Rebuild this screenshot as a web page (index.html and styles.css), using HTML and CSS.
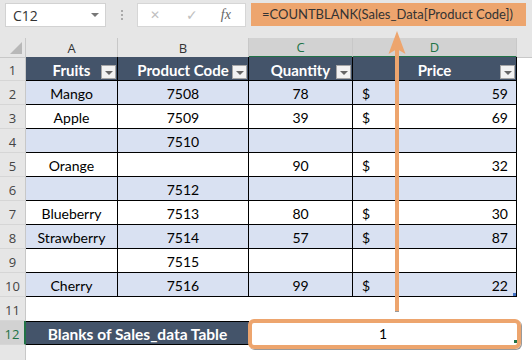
FILE: index.html
```html
<!DOCTYPE html>
<html lang="en">
<head>
 <meta charset="UTF-8">
 <title>COUNTBLANK</title>
 <link rel="stylesheet" href="styles.css">
</head>
<body>
 <div class="toolbar">
  <div class="namebox"><span>C12</span><span class="caret"></span></div>
  <div class="grip"><i></i><i></i><i></i></div>
  <div class="fxbox">
   <span class="cancel">&#x2715;</span>
   <span class="enter">&#x2713;</span>
   <span class="fx">fx</span>
  </div>
  <div class="formula">=COUNTBLANK(Sales_Data[Product Code])</div>
 </div>

 <div class="sheet">
  <div class="row heads">
   <div class="corner"></div>
   <div class="ch">A</div>
   <div class="ch">B</div>
   <div class="ch sel">C</div>
   <div class="ch sel">D</div>
   <div class="ch rest"></div>
  </div>
  <div class="row">
   <div class="rh">1</div>
   <div class="c head">Fruits<b class="filter"></b></div>
   <div class="c head">Product Code<b class="filter"></b></div>
   <div class="c head">Quantity<b class="filter"></b></div>
   <div class="c head">Price<b class="filter"></b></div>
   <div></div>
  </div>
  <div class="row band">
   <div class="rh">2</div>
   <div class="c">Mango</div><div class="c">7508</div><div class="c">78</div>
   <div class="c price"><span>$</span><span>59</span></div><div></div>
  </div>
  <div class="row">
   <div class="rh">3</div>
   <div class="c">Apple</div><div class="c">7509</div><div class="c">39</div>
   <div class="c price"><span>$</span><span>69</span></div><div></div>
  </div>
  <div class="row band">
   <div class="rh">4</div>
   <div class="c"></div><div class="c">7510</div><div class="c"></div>
   <div class="c price"></div><div></div>
  </div>
  <div class="row">
   <div class="rh">5</div>
   <div class="c">Orange</div><div class="c"></div><div class="c">90</div>
   <div class="c price"><span>$</span><span>32</span></div><div></div>
  </div>
  <div class="row band">
   <div class="rh">6</div>
   <div class="c"></div><div class="c">7512</div><div class="c"></div>
   <div class="c price"></div><div></div>
  </div>
  <div class="row">
   <div class="rh">7</div>
   <div class="c">Blueberry</div><div class="c">7513</div><div class="c">80</div>
   <div class="c price"><span>$</span><span>30</span></div><div></div>
  </div>
  <div class="row band">
   <div class="rh">8</div>
   <div class="c">Strawberry</div><div class="c">7514</div><div class="c">57</div>
   <div class="c price"><span>$</span><span>87</span></div><div></div>
  </div>
  <div class="row">
   <div class="rh">9</div>
   <div class="c"></div><div class="c">7515</div><div class="c"></div>
   <div class="c price"></div><div></div>
  </div>
  <div class="row band">
   <div class="rh">10</div>
   <div class="c">Cherry</div><div class="c">7516</div><div class="c">99</div>
   <div class="c price last"><span>$</span><span>22</span></div><div></div>
  </div>
  <div class="row">
   <div class="rh">11</div>
  </div>
  <div class="row">
   <div class="rh sel">12</div>
   <div class="label">Blanks of Sales_data Table</div>
   <div class="result">1</div>
  </div>
  <div class="row">
   <div class="rh"></div>
  </div>
 </div>

 <svg class="arrow" width="28" height="288" viewBox="0 0 28 288">
  <rect x="12" y="18" width="4" height="266" fill="#eda56e"/>
  <rect x="12" y="283" width="4" height="1" fill="#9a9a9a"/>
  <polygon points="14,3 22.5,26 14,21 5.5,26" fill="#eda56e"/>
 </svg>
</body>
</html>
```

FILE: styles.css
```css
* {
 box-sizing: border-box;
}

body {
 margin: 0;
 width: 532px;
 height: 360px;
 overflow: hidden;
 position: relative;
 background: #ffffff;
 font-family: Lato, "Liberation Sans", sans-serif;
 color: #000;
}

/* formula bar */
.toolbar {
 display: flex;
 align-items: flex-start;
 height: 38px;
 padding: 3px 0 0 5px;
 background: #e6e6e6;
}

.namebox {
 display: flex;
 align-items: center;
 justify-content: space-between;
 width: 101px;
 height: 24px;
 padding: 0 6px 0 7px;
 background: #fff;
 border: 1px solid #d2d2d2;
 font: 14px "Open Sans", sans-serif;
 color: #333;
}

.caret {
 border-left: 4px solid transparent;
 border-right: 4px solid transparent;
 border-top: 4px solid #777;
}

.grip {
 display: flex;
 flex-direction: column;
 align-items: center;
 gap: 2px;
 width: 31px;
 padding-top: 7px;
}

.grip i {
 width: 2px;
 height: 2px;
 background: #aaa;
}

.fxbox {
 display: flex;
 align-items: center;
 width: 109px;
 height: 24px;
 background: #fff;
 border: 1px solid #d6d6d6;
 color: #c0c0c0;
 font-size: 14px;
}

.cancel {
 margin-left: 12px;
 font-family: "DejaVu Sans", sans-serif;
 font-size: 12px;
}

.enter {
 margin-left: 26px;
 font-family: "DejaVu Sans", sans-serif;
 font-size: 14px;
}

.fx {
 margin-left: 23px;
 font: italic 14px "Liberation Serif", serif;
 color: #666;
}

.formula {
 flex: 1;
 height: 23px;
 margin: 0 6px 0 5px;
 padding-left: 11px;
 background: #eda56e;
 font: 13px Lato, sans-serif;
 line-height: 23px;
 color: #333;
 white-space: nowrap;
}

/* sheet grid */
.row {
 display: grid;
 grid-template-columns: 26px 92px 131px 104px 164px 1fr;
 height: 24px;
}

.row.heads {
 height: 19px;
}

.corner {
 position: relative;
 background: #e6e6e6;
 border-right: 1px solid #c8c8c8;
 border-bottom: 1px solid #c8c8c8;
}

.corner::after {
 content: "";
 position: absolute;
 right: 3px;
 bottom: 3px;
 border-left: 12px solid transparent;
 border-bottom: 12px solid #b8b8b8;
}

.ch {
 display: flex;
 align-items: center;
 justify-content: center;
 background: #e6e6e6;
 border-right: 1px solid #c8c8c8;
 border-bottom: 1px solid #c8c8c8;
 font: 13px "Open Sans", sans-serif;
 color: #333;
}

.ch.sel {
 background: #d2d2d2;
 border-bottom: 2px solid #217346;
 color: #217346;
}

.ch.rest {
 border-right: none;
}

.rh {
 display: flex;
 align-items: center;
 justify-content: center;
 background: #e6e6e6;
 border-right: 1px solid #c8c8c8;
 border-bottom: 1px solid #d6d6d6;
 font: 13px "Open Sans", sans-serif;
 color: #444;
 padding-top: 2px;
}

.rh.sel {
 background: #d2d2d2;
 border-right: 2px solid #217346;
 color: #217346;
}

.c {
 position: relative;
 display: flex;
 align-items: center;
 justify-content: center;
 border-right: 1px solid #000;
 border-bottom: 1px solid #000;
 font-size: 14px;
 padding-top: 2px;
}

.band .c {
 background: #d9e1f2;
}

.c.head {
 background: #44546a;
 color: #fff;
 font-weight: bold;
 font-size: 15px;
}

.filter {
 position: absolute;
 right: 1px;
 bottom: 1px;
 width: 15px;
 height: 14px;
 background: #f2f2f2;
 border: 1px solid #a6a6a6;
}

.filter::after {
 content: "";
 position: absolute;
 left: 3px;
 top: 5px;
 border-left: 4px solid transparent;
 border-right: 4px solid transparent;
 border-top: 4px solid #666;
}

.c.price {
 justify-content: space-between;
 padding-left: 9px;
 padding-right: 8px;
}

.c.last::after {
 content: "";
 position: absolute;
 right: 0;
 bottom: 0;
 width: 3px;
 height: 3px;
 background: #4472c4;
}

.label {
 grid-column: span 2;
 display: flex;
 align-items: center;
 justify-content: center;
 background: #44546a;
 border-top: 1px solid #000;
 border-bottom: 1px solid #000;
 color: #fff;
 font-weight: bold;
 font-size: 15.5px;
 padding-top: 1px;
}

.result {
 grid-column: span 2;
 position: relative;
 display: flex;
 align-items: center;
 justify-content: center;
 font-size: 14px;
}

.result::before {
 content: "";
 position: absolute;
 right: 0;
 bottom: 2px;
 width: 3px;
 height: 3px;
 background: #217346;
}

.result::after {
 content: "";
 position: absolute;
 left: -1px;
 top: -2px;
 right: -4px;
 bottom: -4px;
 border: 4px solid #eda56e;
 border-radius: 6px;
 box-shadow: 1px 1px 0 #9a9a9a;
}

/* annotation arrow */
.arrow {
 position: absolute;
 left: 383px;
 top: 28px;
}
```
